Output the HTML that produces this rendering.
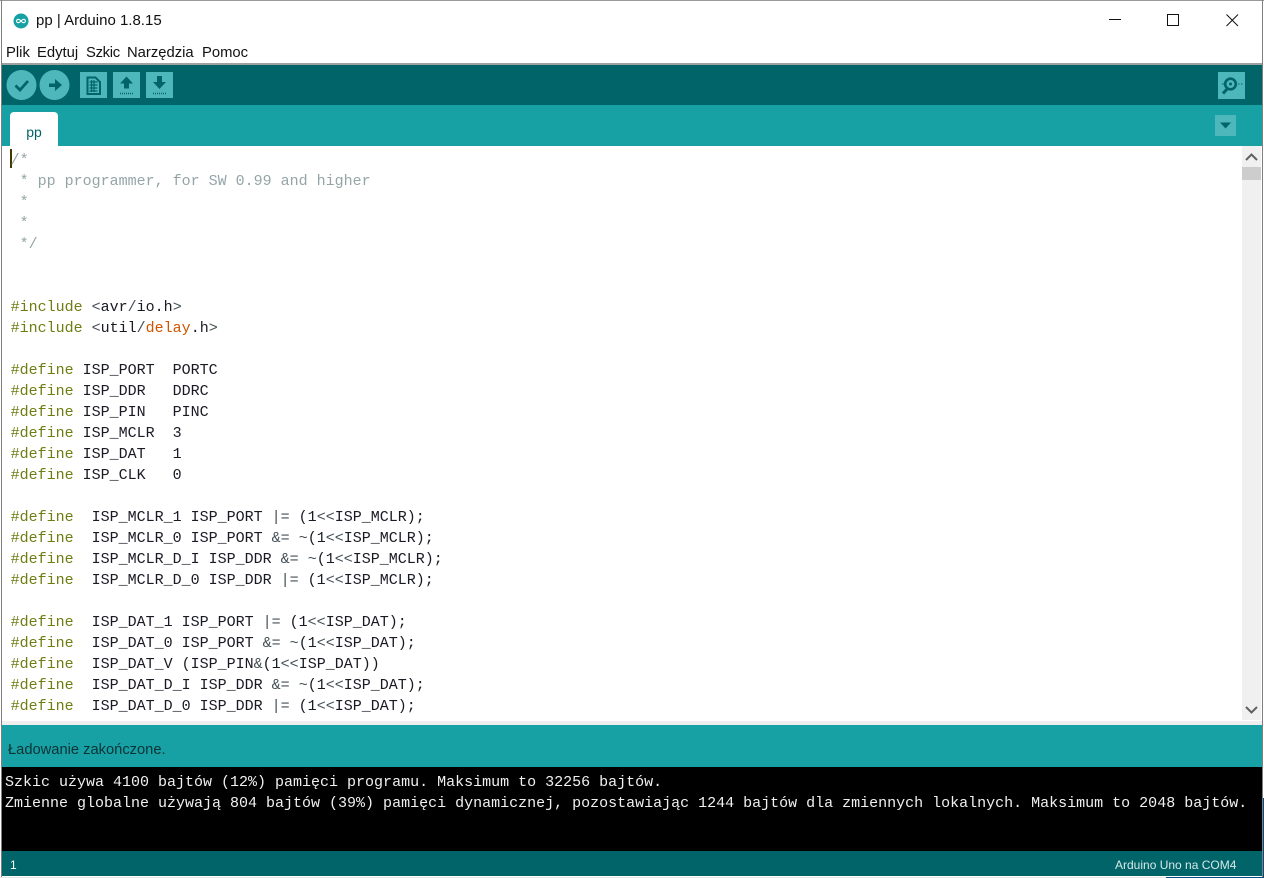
<!DOCTYPE html>
<html><head><meta charset="utf-8"><style>
html,body{margin:0;padding:0;width:1264px;height:878px;overflow:hidden;background:#fff;font-family:"Liberation Sans",sans-serif}
.a{position:absolute}
.m{position:absolute;top:44px;font-size:14.8px;line-height:18px;color:#111;white-space:pre}
pre{position:absolute;margin:0;font:15px/21px "Liberation Mono",monospace;white-space:pre;color:#1a1a24}
.c{color:#95A5A6}.k{color:#6f7d12}.o{color:#D35400}.s{color:#434F54}
</style></head><body>
<div class="a" style="left:0;top:0;width:1264px;height:1px;background:#9a9a9a"></div>
<div class="a" style="left:1px;top:0;width:1px;height:877px;background:#7f7f7f"></div>
<div class="a" style="left:1262px;top:0;width:1px;height:877px;background:#7f7f7f"></div>
<div class="a" style="left:1263px;top:798px;width:1px;height:80px;background:#0a4a7c"></div>
<div class="a" style="left:0;top:877px;width:1166px;height:1px;background:#e8e8e8"></div>
<div class="a" style="left:1166px;top:877px;width:98px;height:1px;background:#0a4a7c"></div>
<svg class="a" style="left:13px;top:13px" width="16" height="16" viewBox="0 0 16 16"><circle cx="8" cy="8" r="7.5" fill="#17A1A5"/><path d="M5.3 6.3a1.7 1.7 0 1 0 0 3.4c1.3 0 2-1.1 2.700-1.700.7-.6 1.400-1.700 2.700-1.700a1.700 1.700 0 1 1 0 3.400c-1.300 0-2-1.100-2.700-1.700-.7-.6-1.400-1.700-2.700-1.700z" fill="none" stroke="#fff" stroke-width="1.1"/></svg>
<div class="a" style="left:36px;top:12px;font-size:15px;line-height:18px;color:#111;white-space:pre">pp | Arduino 1.8.15</div>
<svg class="a" style="left:1100px;top:0" width="162" height="42" fill="none" stroke="#111" stroke-width="1"><path d="M9 19.500H21"/><rect x="67.500" y="14.500" width="11" height="11"/><path d="M126.500 14.500l11.500 11.500M138 14.500l-11.500 11.500"/></svg>
<div class="m" style="left:6px">Plik</div><div class="m" style="left:37px">Edytuj</div><div class="m" style="left:86px;letter-spacing:-.3px">Szkic</div><div class="m" style="left:127px">Narzędzia</div><div class="m" style="left:202px">Pomoc</div>
<div class="a" style="left:2px;top:63px;width:1260px;height:2px;background:#a0a0a0"></div>
<div class="a" style="left:2px;top:65px;width:1260px;height:40px;background:#006468"></div>
<div class="a" style="left:2px;top:105px;width:1260px;height:41px;background:#17A1A5"></div>
<svg class="a" style="left:0;top:65px" width="180" height="40">
<circle cx="21.500" cy="20" r="15" fill="#4DB7BB"/><path d="M15.500 20.500l4.500 4.500L28 16" fill="none" stroke="#006468" stroke-width="2.800"/>
<circle cx="54.500" cy="20" r="15" fill="#4DB7BB"/><path d="M49 18.500h6v-4.500l7 6-7 6V22h-6z" fill="#006468"/>
<rect x="80" y="7" width="27" height="26" fill="#4DB7BB"/><path d="M87.500 12.500h8l4.500 4.500v12h-12.500z" fill="none" stroke="#006468" stroke-width="2"/><path d="M89.500 17h8M89.500 20h8M89.500 23h8M89.500 26h8M91.500 15v12M94 15v12" stroke="#006468" stroke-width="1.200"/>
<rect x="113" y="7" width="27" height="26" fill="#4DB7BB"/><path d="M126.500 11.500l6.500 7h-4v5h-5v-5h-4z" fill="#006468"/><path d="M120 28.500h13" stroke="#006468" stroke-width="1.500" stroke-dasharray="1 1"/>
<rect x="146" y="7" width="27" height="26" fill="#4DB7BB"/><path d="M157 11h5v6h4l-6.500 7-6.500-7h4z" fill="#006468"/><path d="M153 28.500h13" stroke="#006468" stroke-width="1.500" stroke-dasharray="1 1"/>
</svg>
<svg class="a" style="left:1218px;top:72px" width="27" height="27"><rect width="27" height="27" fill="#4DB7BB"/><circle cx="12.500" cy="12" r="5.300" fill="none" stroke="#006468" stroke-width="2.600"/><circle cx="12.500" cy="12" r="1.500" fill="#006468"/><path d="M9.500 16.500L5 21.500" stroke="#006468" stroke-width="3"/><path d="M4 12h2M20 12h1.500M23 12h1.500" stroke="#006468" stroke-width="1"/></svg>
<svg class="a" style="left:1215px;top:115px" width="21" height="21"><rect width="21" height="21" fill="#4DB7BB"/><path d="M5 7.500h11l-5.500 6z" fill="#006468"/></svg>
<div class="a" style="left:10px;top:112px;width:48px;height:34px;background:#fff;border-radius:4px 4px 0 0"></div>
<div class="a" style="left:10px;top:124px;width:48px;text-align:center;font-size:14px;line-height:16px;color:#006468">pp</div>
<div class="a" style="left:10px;top:149px;width:2px;height:19px;background:#3f3a00"></div>
<pre style="left:10.600px;top:150px"><span class="c">/*
 * pp programmer, for SW 0.99 and higher
 *
 *
 */</span>


<span class="k">#include</span> <span class="s">&lt;</span>avr<span class="s">/</span>io.h<span class="s">&gt;</span>
<span class="k">#include</span> <span class="s">&lt;</span>util<span class="s">/</span><span class="o">delay</span>.h<span class="s">&gt;</span>

<span class="k">#define</span> ISP_PORT  PORTC
<span class="k">#define</span> ISP_DDR   DDRC
<span class="k">#define</span> ISP_PIN   PINC
<span class="k">#define</span> ISP_MCLR  3
<span class="k">#define</span> ISP_DAT   1
<span class="k">#define</span> ISP_CLK   0

<span class="k">#define</span>  ISP_MCLR_1 ISP_PORT <span class="s">|=</span> (1<span class="s">&lt;&lt;</span>ISP_MCLR);
<span class="k">#define</span>  ISP_MCLR_0 ISP_PORT <span class="s">&amp;=</span> <span class="s">~</span>(1<span class="s">&lt;&lt;</span>ISP_MCLR);
<span class="k">#define</span>  ISP_MCLR_D_I ISP_DDR <span class="s">&amp;=</span> <span class="s">~</span>(1<span class="s">&lt;&lt;</span>ISP_MCLR);
<span class="k">#define</span>  ISP_MCLR_D_0 ISP_DDR <span class="s">|=</span> (1<span class="s">&lt;&lt;</span>ISP_MCLR);

<span class="k">#define</span>  ISP_DAT_1 ISP_PORT <span class="s">|=</span> (1<span class="s">&lt;&lt;</span>ISP_DAT);
<span class="k">#define</span>  ISP_DAT_0 ISP_PORT <span class="s">&amp;=</span> <span class="s">~</span>(1<span class="s">&lt;&lt;</span>ISP_DAT);
<span class="k">#define</span>  ISP_DAT_V (ISP_PIN<span class="s">&amp;</span>(1<span class="s">&lt;&lt;</span>ISP_DAT))
<span class="k">#define</span>  ISP_DAT_D_I ISP_DDR <span class="s">&amp;=</span> <span class="s">~</span>(1<span class="s">&lt;&lt;</span>ISP_DAT);
<span class="k">#define</span>  ISP_DAT_D_0 ISP_DDR <span class="s">|=</span> (1<span class="s">&lt;&lt;</span>ISP_DAT);</pre>
<div class="a" style="left:1242px;top:146px;width:19px;height:574px;background:#f0f0f0"></div>
<div class="a" style="left:1242px;top:167px;width:19px;height:13px;background:#cdcdcd"></div>
<svg class="a" style="left:1242px;top:146px" width="19" height="576" fill="none" stroke="#606060" stroke-width="2"><path d="M4 14l5.500-5.500L15 14M4 561l5.500 5.500L15 561"/></svg>
<div class="a" style="left:2px;top:721px;width:1260px;height:4px;background:#eeeeee"></div>
<div class="a" style="left:2px;top:725px;width:1260px;height:42px;background:#17A1A5"></div>
<div class="a" style="left:8px;top:742px;font-size:14.700px;line-height:16px;color:#0b3335;white-space:pre">Ładowanie zakończone.</div>
<div class="a" style="left:2px;top:767px;width:1260px;height:84px;background:#000"></div>
<pre style="left:5px;top:772px;color:#f0f0f0">Szkic używa 4100 bajtów (12%) pamięci programu. Maksimum to 32256 bajtów.
Zmienne globalne używają 804 bajtów (39%) pamięci dynamicznej, pozostawiając 1244 bajtów dla zmiennych lokalnych. Maksimum to 2048 bajtów.</pre>
<div class="a" style="left:2px;top:851px;width:1260px;height:25px;background:#006468"></div>
<div class="a" style="left:10px;top:858px;font-size:12px;line-height:14px;color:#fff">1</div>
<div class="a" style="left:1115px;top:858px;font-size:12px;line-height:14px;color:#d8e8e8;white-space:pre">Arduino Uno na COM4</div>
</body></html>
